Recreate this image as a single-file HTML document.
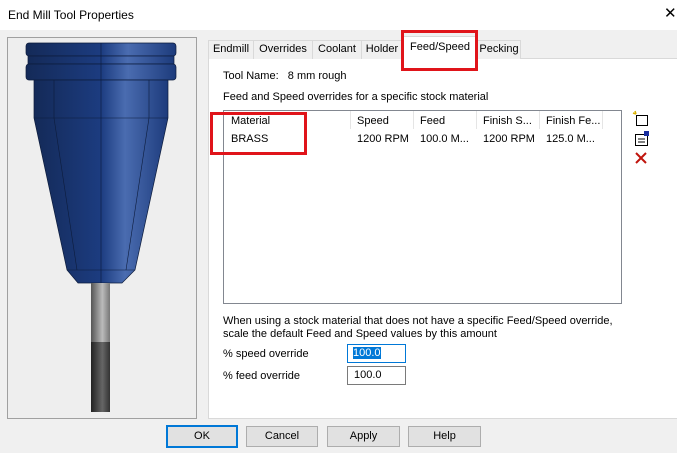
<!DOCTYPE html>
<html><head><style>
body{margin:0;width:677px;height:453px;background:#f0f0f0;font-family:"Liberation Sans",sans-serif;font-size:11px;color:#000;position:relative;overflow:hidden}
.a{position:absolute}
.tab{position:absolute;top:40px;height:18px;border:1px solid #d9d9d9;border-bottom:none;background:#f0f0f0;line-height:17px;text-align:center}
.btn{position:absolute;top:426px;height:19px;border:1px solid #adadad;background:#e1e1e1;text-align:center;line-height:19px}
.red{position:absolute;border:3px solid #e0141a;box-sizing:border-box}
</style></head><body>
<div class="a" style="left:0;top:0;width:677px;height:30px;background:#fff"></div>
<div class="a" style="left:8px;top:8px;font-size:12px">End Mill Tool Properties</div>
<div class="a" style="left:664px;top:4px;font-size:15px">✕</div>
<div class="a" style="left:7px;top:37px;width:188px;height:380px;border:1px solid #a0a0a0;background:#eeeeee"></div>
<svg class="a" style="left:0;top:0" width="210" height="420">
<defs><linearGradient id="g" x1="0" x2="1"><stop offset="0" stop-color="#142a58"/><stop offset=".5" stop-color="#1c3c80"/><stop offset=".68" stop-color="#4a6cb0"/><stop offset="1" stop-color="#1d3b7c"/></linearGradient>
<linearGradient id="s" x1="0" x2="1"><stop offset="0" stop-color="#555"/><stop offset=".6" stop-color="#bbb"/><stop offset="1" stop-color="#777"/></linearGradient>
<linearGradient id="d" x1="0" x2="1"><stop offset="0" stop-color="#222"/><stop offset=".6" stop-color="#666"/><stop offset="1" stop-color="#333"/></linearGradient></defs>
<rect x="26" y="43" width="150" height="13" rx="3" fill="url(#g)" stroke="#0d1c3c" stroke-width=".7"/>
<rect x="28" y="56" width="146" height="8" fill="url(#g)" stroke="#0d1c3c" stroke-width=".7"/>
<rect x="26" y="64" width="150" height="16" rx="3" fill="url(#g)" stroke="#0d1c3c" stroke-width=".7"/>
<path d="M34 80H168V118L135 270L122 283H78L67 270L34 118Z" fill="url(#g)" stroke="#0d1c3c" stroke-width=".7"/>
<path d="M34 118H168M54 80V118L77 270M149 80V118L126 270M101 43V283M67 270H135" stroke="#0d1c3c" stroke-width=".6" fill="none"/>
<rect x="91" y="283" width="19" height="59" fill="url(#s)"/>
<rect x="91" y="342" width="19" height="70" fill="url(#d)"/>
</svg>
<div class="a" style="left:208px;top:58px;width:469px;height:359px;background:#fff;border:1px solid #d9d9d9;border-right:none"></div>
<div class="tab" style="left:208px;width:44px">Endmill</div>
<div class="tab" style="left:253px;width:58px">Overrides</div>
<div class="tab" style="left:312px;width:48px">Coolant</div>
<div class="tab" style="left:361px;width:40px">Holder</div>
<div class="tab" style="left:402px;top:36px;height:23px;width:74px;background:#fff;line-height:20px">Feed/Speed</div>
<div class="tab" style="left:477px;width:42px">Pecking</div>
<div class="a" style="left:223px;top:70px">Tool Name:&nbsp;&nbsp; 8 mm rough</div>
<div class="a" style="left:223px;top:91px">Feed and Speed overrides for a specific stock material</div>
<div class="a" style="left:223px;top:110px;width:397px;height:192px;border:1px solid #828790;background:#fff"></div>
<div class="a" style="left:231px;top:115px">Material</div><div class="a" style="left:231px;top:133px">BRASS</div>
<div class="a" style="left:357px;top:115px">Speed</div><div class="a" style="left:357px;top:133px">1200 RPM</div>
<div class="a" style="left:420px;top:115px">Feed</div><div class="a" style="left:420px;top:133px">100.0 M...</div>
<div class="a" style="left:483px;top:115px">Finish S...</div><div class="a" style="left:483px;top:133px">1200 RPM</div>
<div class="a" style="left:546px;top:115px">Finish Fe...</div><div class="a" style="left:546px;top:133px">125.0 M...</div>
<div class="a" style="left:350px;top:111px;width:1px;height:18px;background:#e5e5e5"></div>
<div class="a" style="left:413px;top:111px;width:1px;height:18px;background:#e5e5e5"></div>
<div class="a" style="left:476px;top:111px;width:1px;height:18px;background:#e5e5e5"></div>
<div class="a" style="left:539px;top:111px;width:1px;height:18px;background:#e5e5e5"></div>
<div class="a" style="left:602px;top:111px;width:1px;height:18px;background:#e5e5e5"></div>
<svg class="a" style="left:632px;top:110px" width="20" height="60">
<rect x="4.5" y="5.5" width="11" height="10" fill="#fff" stroke="#000"/><path d="M3 1l1 3M1 3l3 1" stroke="#d8b000" stroke-width="1.5"/>
<rect x="3.5" y="24.5" width="12" height="11" fill="#fff" stroke="#000"/><path d="M6 29h7M6 32h7" stroke="#000"/><rect x="12" y="21" width="5" height="5" fill="#1a2ea0"/>
<path d="M4 43l10 10M14 43L4 53" stroke="#c0140c" stroke-width="2"/>
</svg>
<div class="a" style="left:223px;top:315px;line-height:13px">When using a stock material that does not have a specific Feed/Speed override,<br>scale the default Feed and Speed values by this amount</div>
<div class="a" style="left:223px;top:348px">% speed override</div>
<div class="a" style="left:223px;top:370px">% feed override</div>
<div class="a" style="left:347px;top:344px;width:57px;height:17px;border:1px solid #0078d7;background:#fff"><span style="position:absolute;left:5px;top:2px;background:#0078d7;color:#fff">100.0</span></div>
<div class="a" style="left:347px;top:366px;width:57px;height:17px;border:1px solid #7a7a7a;background:#fff"><span style="position:absolute;left:6px;top:2px">100.0</span></div>
<div class="btn" style="left:166px;width:68px;border:2px solid #0078d7;top:425px">OK</div>
<div class="btn" style="left:246px;width:70px">Cancel</div>
<div class="btn" style="left:327px;width:71px">Apply</div>
<div class="btn" style="left:408px;width:71px">Help</div>
<div class="red" style="left:401px;top:30px;width:77px;height:41px"></div>
<div class="red" style="left:210px;top:112px;width:97px;height:43px"></div>
</body></html>
